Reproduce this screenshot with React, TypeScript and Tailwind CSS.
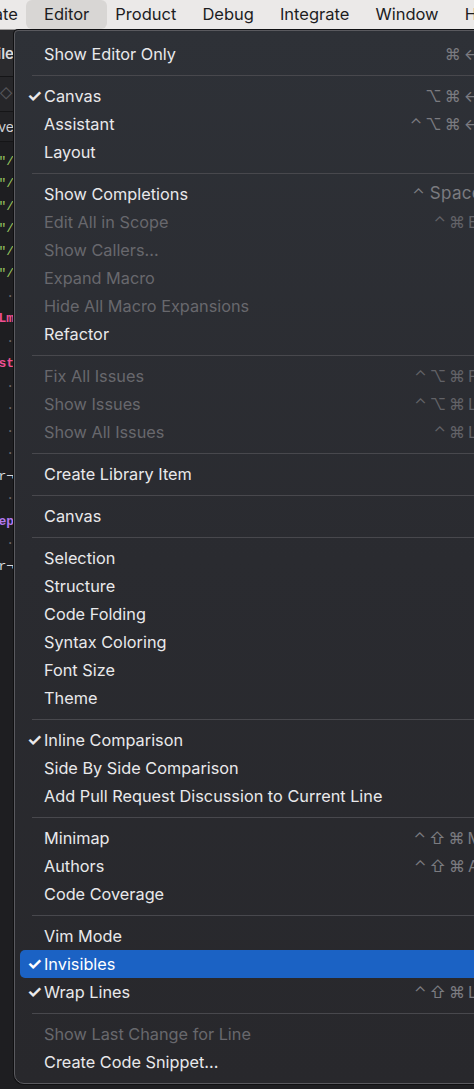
type Item =
  | { sep: true }
  | {
      sep?: false;
      label: string;
      check?: boolean;
      disabled?: boolean;
      active?: boolean;
      mods?: string;
      keyName?: string;
    };

const items: Item[] = [
  { label: "Show Editor Only", mods: "⌘", keyName: "↩" },
  { sep: true },
  { label: "Canvas", check: true, mods: "⌥⌘", keyName: "↩" },
  { label: "Assistant", mods: "⌃⌥⌘", keyName: "↩" },
  { label: "Layout" },
  { sep: true },
  { label: "Show Completions", mods: "⌃", keyName: "Space" },
  { label: "Edit All in Scope", disabled: true, mods: "⌃⌘", keyName: "E" },
  { label: "Show Callers...", disabled: true },
  { label: "Expand Macro", disabled: true },
  { label: "Hide All Macro Expansions", disabled: true },
  { label: "Refactor" },
  { sep: true },
  { label: "Fix All Issues", disabled: true, mods: "⌃⌥⌘", keyName: "F" },
  { label: "Show Issues", disabled: true, mods: "⌃⌥⌘", keyName: "L" },
  { label: "Show All Issues", disabled: true, mods: "⌃⌘", keyName: "L" },
  { sep: true },
  { label: "Create Library Item" },
  { sep: true },
  { label: "Canvas" },
  { sep: true },
  { label: "Selection" },
  { label: "Structure" },
  { label: "Code Folding" },
  { label: "Syntax Coloring" },
  { label: "Font Size" },
  { label: "Theme" },
  { sep: true },
  { label: "Inline Comparison", check: true },
  { label: "Side By Side Comparison" },
  { label: "Add Pull Request Discussion to Current Line" },
  { sep: true },
  { label: "Minimap", mods: "⌃⇧⌘", keyName: "M" },
  { label: "Authors", mods: "⌃⇧⌘", keyName: "A" },
  { label: "Code Coverage" },
  { sep: true },
  { label: "Vim Mode" },
  { label: "Invisibles", check: true, active: true },
  { label: "Wrap Lines", check: true, mods: "⌃⇧⌘", keyName: "L" },
  { sep: true },
  { label: "Show Last Change for Line", disabled: true },
  { label: "Create Code Snippet..." },
];

// what peeks out of the editor on the left of the menu
const codeLines: { text: string; color: string }[] = [
  { text: "\"/", color: "text-[#98c35f]" },
  { text: "\"/", color: "text-[#98c35f]" },
  { text: "\"/", color: "text-[#98c35f]" },
  { text: "\"/", color: "text-[#98c35f]" },
  { text: "\"/", color: "text-[#98c35f]" },
  { text: "\"/", color: "text-[#98c35f]" },
  { text: "·", color: "text-[#6a6a70]" },
  { text: "Lm", color: "text-[#ef4f91] font-bold" },
  { text: "·", color: "text-[#6a6a70]" },
  { text: "st", color: "text-[#ef4f91] font-bold" },
  { text: "·", color: "text-[#6a6a70]" },
  { text: "·", color: "text-[#6a6a70]" },
  { text: "·", color: "text-[#6a6a70]" },
  { text: "·", color: "text-[#6a6a70]" },
  { text: "r¬", color: "text-[#d8d8dc]" },
  { text: "·", color: "text-[#6a6a70]" },
  { text: "ep", color: "text-[#b178ec] font-bold" },
  { text: "·", color: "text-[#6a6a70]" },
  { text: "r¬", color: "text-[#d8d8dc]" },
];

export default function App() {
  return (
    <div
      className="relative h-[1089px] w-[474px] overflow-hidden bg-[#1e1e21]"
      style={{ fontFamily: "Inter, 'Liberation Sans', sans-serif" }}
    >
      {/* menu bar */}
      <div className="flex h-[30px] items-center gap-[26px] whitespace-nowrap border-b border-[#9c9a99] bg-[#ebe9e8] text-[16.5px] text-[#1d1d1f]">
        <span className="-ml-[51px]">Navigate</span>
        <span className="-mx-[18px] flex h-[29px] items-center rounded-[6px] bg-[#d8d6d4] px-[18px]">
          Editor
        </span>
        <span>Product</span>
        <span>Debug</span>
        <span>Integrate</span>
        <span>Window</span>
        <span>Help</span>
      </div>

      <div className="flex">
        {/* editor strip behind the menu */}
        <div className="w-[14px] shrink-0 overflow-hidden">
          <div className="flex h-[47px] items-center justify-end border-b border-[#151517] bg-[#2b2b2e] pt-[3px] text-[15px] font-semibold text-[#dadade]">
            <span className="whitespace-nowrap">File</span>
          </div>
          <div className="flex h-[35px] items-center justify-end border-b border-[#151517] bg-[#262629] pr-[1px] text-[13px] text-[#55555a]">
            ◇
          </div>
          <div className="flex h-[30px] items-center justify-end border-b border-[#151517] bg-[#232326] text-[14px] text-[#d0d0d4]">
            <span className="whitespace-nowrap">Save</span>
          </div>
          <div className="h-[8px]" />
          {codeLines.map((line, i) => (
            <div
              key={i}
              className={`flex h-[22.5px] items-center justify-end whitespace-nowrap font-mono text-[13px] ${line.color}`}
            >
              {line.text}
            </div>
          ))}
        </div>

        {/* Editor menu */}
        <div className="w-[482px] shrink-0 rounded-tl-[4px] rounded-bl-[10px] border border-[#5a5a5f] bg-gradient-to-b from-[#2e3137] via-[#2a2b30] to-[#28282c] pb-[7px] pt-[9px] shadow-[0_0_0_1px_#101012]">
          {items.map((item, i) =>
            item.sep ? (
              <div key={i} className="mx-[5px] flex h-[14px] items-center pl-[12px]">
                <div className="h-px flex-1 bg-[#48484d]" />
              </div>
            ) : (
              <div
                key={i}
                className={`mx-[5px] flex h-[28px] items-center whitespace-nowrap rounded-[5px] pl-[7px] pr-[8px] text-[16.3px] ${
                  item.active
                    ? "bg-[#1b62c4] text-white"
                    : item.disabled
                      ? "text-[#68686d]"
                      : "text-[#e9e9eb]"
                }`}
              >
                <span className="w-[17px] text-[17px] font-bold leading-none">{item.check ? "✓" : ""}</span>
                <span className="flex-1">{item.label}</span>
                {item.keyName && (
                  <span
                    className={`flex items-center text-[16px] ${
                      item.disabled ? "text-[#626267]" : "text-[#7b7b80]"
                    }`}
                    style={{ fontFamily: "Inter, 'DejaVu Sans', sans-serif" }}
                  >
                    <span className={item.keyName === "Space" ? "mr-[5px]" : "tracking-[3px]"}>
                      {item.mods}
                    </span>
                    <span
                      className={
                        item.keyName === "Space" ? "text-[17px] tracking-[0.3px]" : "min-w-[14px]"
                      }
                    >
                      {item.keyName}
                    </span>
                  </span>
                )}
              </div>
            ),
          )}
        </div>
      </div>
    </div>
  );
}
